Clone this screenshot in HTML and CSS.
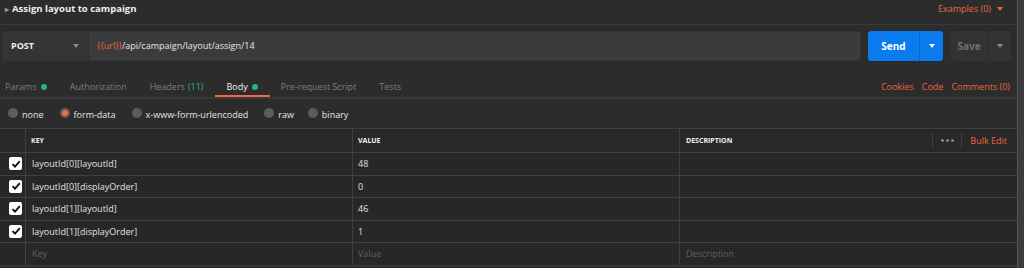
FILE: index.html
```html
<!DOCTYPE html>
<html>
<head>
<meta charset="utf-8">
<link rel="stylesheet" href="styles.css">
</head>
<body>
<div class="app">
  <div class="main">
    <div class="titlebar">
      <div class="title"><span class="caret">&#9656;</span>Assign layout to campaign</div>
      <div class="examples">Examples (0) <span class="ex-arrow"></span></div>
    </div>
    <div class="urlrow">
      <div class="urlbox">
        <div class="method"><span>POST</span><span class="tri"></span></div>
        <div class="url"><span class="var">{{url}}</span>/api/campaign/layout/assign/14</div>
      </div>
      <div class="send"><span class="send-label">Send</span><span class="send-drop"><span class="tri white"></span></span></div>
      <div class="save"><span class="save-label">Save</span><span class="save-drop"><span class="tri"></span></span></div>
    </div>
    <div class="tabs">
      <div class="tablist">
        <div class="tab">Params<span class="dot"></span></div>
        <div class="tab">Authorization</div>
        <div class="tab">Headers <span class="green">(11)</span></div>
        <div class="tab active">Body<span class="dot"></span></div>
        <div class="tab">Pre-request Script</div>
        <div class="tab">Tests</div>
      </div>
      <div class="links">
        <span>Cookies</span><span>Code</span><span>Comments (0)</span>
      </div>
    </div>
    <div class="radios">
      <div class="radio"><span class="circle"></span>none</div>
      <div class="radio"><span class="circle on"></span>form-data</div>
      <div class="radio"><span class="circle"></span>x-www-form-urlencoded</div>
      <div class="radio"><span class="circle"></span>raw</div>
      <div class="radio"><span class="circle"></span>binary</div>
    </div>
    <div class="table">
      <div class="row head">
        <div class="c chk"></div>
        <div class="c key">KEY</div>
        <div class="c val">VALUE</div>
        <div class="c desc"><span>DESCRIPTION</span>
          <div class="tools"><span class="sep"></span><span class="more"><svg viewBox="0 0 13 3" width="13" height="3"><circle cx="1.5" cy="1.5" r="1.3" fill="#a0a0a0"/><circle cx="6.5" cy="1.5" r="1.3" fill="#a0a0a0"/><circle cx="11.5" cy="1.5" r="1.3" fill="#a0a0a0"/></svg></span><span class="sep"></span><span class="bulk">Bulk Edit</span></div>
        </div>
      </div>
      <div class="row">
        <div class="c chk"><span class="box"><svg viewBox="0 0 12 12" width="12" height="12"><path d="M2.5 6.2 L5 8.7 L9.8 3.2" fill="none" stroke="#111" stroke-width="1.8"/></svg></span></div>
        <div class="c key">layoutId[0][layoutId]</div>
        <div class="c val">48</div>
        <div class="c desc"></div>
      </div>
      <div class="row">
        <div class="c chk"><span class="box"><svg viewBox="0 0 12 12" width="12" height="12"><path d="M2.5 6.2 L5 8.7 L9.8 3.2" fill="none" stroke="#111" stroke-width="1.8"/></svg></span></div>
        <div class="c key">layoutId[0][displayOrder]</div>
        <div class="c val">0</div>
        <div class="c desc"></div>
      </div>
      <div class="row">
        <div class="c chk"><span class="box"><svg viewBox="0 0 12 12" width="12" height="12"><path d="M2.5 6.2 L5 8.7 L9.8 3.2" fill="none" stroke="#111" stroke-width="1.8"/></svg></span></div>
        <div class="c key">layoutId[1][layoutId]</div>
        <div class="c val">46</div>
        <div class="c desc"></div>
      </div>
      <div class="row">
        <div class="c chk"><span class="box"><svg viewBox="0 0 12 12" width="12" height="12"><path d="M2.5 6.2 L5 8.7 L9.8 3.2" fill="none" stroke="#111" stroke-width="1.8"/></svg></span></div>
        <div class="c key">layoutId[1][displayOrder]</div>
        <div class="c val">1</div>
        <div class="c desc"></div>
      </div>
      <div class="row">
        <div class="c chk"></div>
        <div class="c key ph">Key</div>
        <div class="c val ph">Value</div>
        <div class="c desc ph">Description</div>
      </div>
    </div>
  </div>
  <div class="scroll"></div>
</div>
</body>
</html>
```
FILE: styles.css
```css
* { box-sizing: border-box; }
html, body { margin: 0; padding: 0; }
body {
  background: #2c2c2c;
  font-family: "Open Sans", "Liberation Sans", sans-serif;
  font-size: 9px;
  color: #e2e2e2;
  width: 1024px;
  height: 268px;
  overflow: hidden;
}
.app { display: flex; height: 268px; }
.main { width: 1017px; display: flex; flex-direction: column; }
.scroll { width: 7px; background: #3b3b3b; border-left: 1px solid #555; }

.titlebar {
  height: 25px;
  display: flex;
  align-items: center;
  justify-content: space-between;
  border-bottom: 1px solid #3a3a3a;
  padding: 0 14px 7px 5px;
}
.title { font-weight: 700; font-size: 9.5px; color: #f0f0f0; display: flex; align-items: center; }
.caret { color: #9a9a9a; font-size: 8px; margin-right: 3px; }
.examples { color: #e8673c; font-size: 9px; display: flex; align-items: center; }
.ex-arrow {
  width: 0; height: 0;
  border-left: 3.5px solid transparent;
  border-right: 3.5px solid transparent;
  border-top: 4px solid #e8673c;
  margin-left: 6px;
}

.urlrow {
  display: flex;
  align-items: center;
  padding: 5px 0 0 2px;
  height: 36px;
}
.urlbox {
  display: flex;
  width: 859px;
  height: 30px;
  background: #3b3b3b;
  border: 1px solid #333;
  border-radius: 3px;
  overflow: hidden;
}
.method {
  width: 86px;
  background: #343434;
  border-right: 1px solid #2e2e2e;
  display: flex;
  align-items: center;
  justify-content: space-between;
  padding: 0 9px 0 8px;
  font-weight: 700;
  font-size: 9px;
  color: #f0f0f0;
}
.tri {
  width: 0; height: 0;
  border-left: 3.5px solid transparent;
  border-right: 3.5px solid transparent;
  border-top: 4px solid #8a8a8a;
  display: inline-block;
}
.tri.white { border-top-color: #fff; }
.url { display: flex; align-items: center; padding-left: 8px; color: #e6e6e6; font-size: 9px; }
.var { color: #e8673c; }
.send {
  margin-left: 7px;
  width: 75px;
  height: 30px;
  background: #097bed;
  border-radius: 3px;
  display: flex;
  color: #fff;
  font-weight: 700;
  font-size: 10px;
}
.send-label { width: 52px; display: flex; align-items: center; justify-content: center; border-right: 1px solid #0868cc; }
.send-drop { flex: 1; display: flex; align-items: center; justify-content: center; }
.save {
  margin-left: 8px;
  width: 60px;
  height: 30px;
  background: #333;
  border-radius: 3px;
  display: flex;
  color: #707070;
  font-weight: 700;
  font-size: 10px;
}
.save-label { width: 37px; display: flex; align-items: center; justify-content: center; border-right: 1px solid #2c2c2c; }
.save-drop { flex: 1; display: flex; align-items: center; justify-content: center; }

.tabs {
  height: 38px;
  display: flex;
  justify-content: space-between;
  align-items: flex-end;
  border-bottom: 2px solid #383838;
}
.tablist { display: flex; padding-left: 5px; gap: 23px; }
.tab {
  position: relative;
  color: #7d7d7d;
  font-size: 9px;
  height: 26px;
  display: flex;
  align-items: flex-start;
  padding-top: 9px;
}
.tab.active { color: #f2f2f2; }
.tab.active::after {
  content: "";
  position: absolute;
  left: -11px; right: -12px; bottom: 0;
  height: 2px;
  background: #f26b3a;
}
.green { color: #26b47f; margin-left: 3px; }
.dot { width: 6px; height: 6px; border-radius: 50%; background: #26b47f; margin: 4px 0 0 4px; }
.links { display: flex; gap: 8px; color: #e8673c; font-size: 9px; padding-right: 7px; height: 26px; padding-top: 9px; }

.radios {
  height: 29px;
  display: flex;
  align-items: center;
  padding: 1px 0 0 8px;
  gap: 16px;
  font-size: 9px;
  color: #e6e6e6;
}
.radio { display: flex; align-items: center; }
.radio:nth-child(5) { margin-left: -2px; }
.circle {
  width: 10px; height: 10px;
  border-radius: 50%;
  background: #5c5c5c;
  margin-right: 4px;
  margin-top: -3px;
  display: inline-flex;
  align-items: center;
  justify-content: center;
}
.circle.on::after {
  content: "";
  width: 6px; height: 6px; border-radius: 50%;
  background: #f26b3a;
}

.table { border-top: 1px solid #3f3f3f; }
.row { display: flex; height: 22.5px; border-bottom: 1px solid #404040; background: #272727; }
.row.head { height: 24px; background: #282828; }
.c { border-right: 1px solid #404040; display: flex; align-items: center; padding-left: 6px; }
.chk { width: 26px; padding-left: 9px; }
.key { width: 327px; }
.val { width: 327px; padding-left: 5px; }
.desc { flex: 1; border-right: none; justify-content: space-between; }
.head .c { font-size: 7px; font-weight: 700; color: #f0f0f0; }
.head .key { padding-left: 5px; }
.tools { display: flex; align-items: center; height: 100%; }
.sep { width: 1px; height: 16px; background: #3f3f3f; }
.more { display: flex; align-items: center; padding: 0 7px 0 8px; }
.bulk { color: #e8673c; font-size: 9px; font-weight: 400; padding: 0 10px 0 8px; }
.box {
  width: 13px; height: 13px;
  background: #fff;
  border-radius: 2px;
  display: flex;
  align-items: center;
  justify-content: center;
}
.ph { color: #5f5f5f; }
```
